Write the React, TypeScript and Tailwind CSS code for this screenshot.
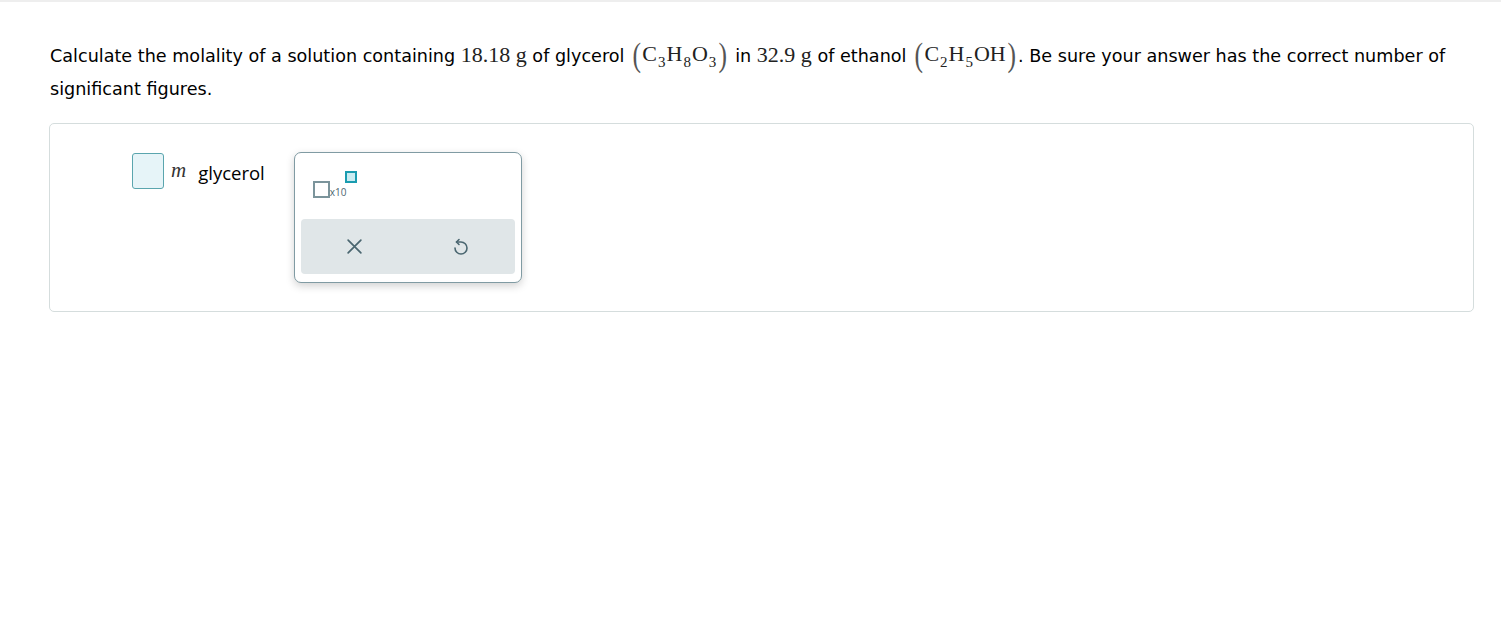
import React from 'react'

const TEXT = { fontFamily: '"DejaVu Sans", Verdana, sans-serif' }
const MATH = { fontFamily: '"Liberation Serif", "Times New Roman", serif' }
const UI = { fontFamily: '"Open Sans", "Noto Sans", sans-serif' }

function Sub({ children }: { children: React.ReactNode }) {
  return <span className="relative top-[6px] text-[15px] ml-[1px] mr-[1px]">{children}</span>
}

function Paren({ children }: { children: React.ReactNode }) {
  return (
    <span className="inline-flex items-center align-middle -mt-[4px] mx-[1px]" style={MATH}>
      <span className="text-[34px] leading-none text-[#555] scale-x-75 inline-block">(</span>
      <span className="text-[22px] text-[#222]">{children}</span>
      <span className="text-[34px] leading-none text-[#555] scale-x-75 inline-block">)</span>
    </span>
  )
}

function M({ children }: { children: React.ReactNode }) {
  return <span className="text-[22px] leading-none text-[#222]" style={MATH}>{children}</span>
}

export default function App() {
  return (
    <div className="min-h-[636px] bg-white border-t-2 border-[#eeeeee]">
      <div className="pl-[50px] pr-[30px] pt-[38px]">
        <p className="text-[17.6px] leading-[33px] text-black" style={TEXT}>
          Calculate the molality of a solution containing <M>18.18 g</M> of glycerol{' '}
          <Paren>C<Sub>3</Sub>H<Sub>8</Sub>O<Sub>3</Sub></Paren> in <M>32.9 g</M> of ethanol{' '}
          <Paren>C<Sub>2</Sub>H<Sub>5</Sub>OH</Paren>. Be sure your answer has the correct number of
          significant figures.
        </p>
      </div>

      <div className="ml-[49px] mr-[27px] mt-[17px] h-[189px] rounded-[5px] border border-[#d5dddd] pl-[82px] pt-[29px] flex items-start">
        <div className="flex items-center">
          <div className="w-[32px] h-[36px] rounded-[3px] border border-[#5aa5ae] bg-[#e6f4f8]" />
          <span className="ml-[7px] text-[21px] italic text-[#333]" style={MATH}>m</span>
          <span className="ml-[12px] text-[18.5px] text-black mt-[4px]" style={UI}>glycerol</span>
        </div>

        <div className="ml-[29px] -mt-[1px] w-[228px] h-[131px] rounded-[7px] border border-[#809ba3] bg-white shadow-[0_3px_8px_rgba(0,0,0,0.18)] px-[6px] pt-[18px]">
          <div className="flex items-end h-[27px] pl-[12px]">
            <div className="w-[17px] h-[17px] border-2 border-[#7b949b]" />
            <span className="text-[10px] leading-none text-[#4c6670] mb-[1px]" style={UI}>x10</span>
            <div className="self-start -ml-[1px] w-[12px] h-[12px] border-2 border-[#1a9cb0] bg-[#c9ecf2]" />
          </div>
          <div className="mt-[21px] h-[55px] rounded-[4px] bg-[#e0e6e8] flex items-center">
            <div className="w-1/2 flex justify-center">
              <svg width="17" height="17" viewBox="0 0 16 16" fill="none" stroke="#4a6670" strokeWidth="1.6" strokeLinecap="round">
                <path d="M2 2 L14 14 M14 2 L2 14" />
              </svg>
            </div>
            <div className="w-1/2 flex justify-center">
              <svg width="16" height="19" viewBox="0 0 16 18" fill="none" stroke="#4a6670" strokeWidth="1.6" strokeLinecap="round" strokeLinejoin="round">
                <path d="M6 2 L3.5 4.5 L6 7" />
                <path d="M3.5 4.5 H8 A6 6 0 1 1 2 10.5" />
              </svg>
            </div>
          </div>
        </div>
      </div>
    </div>
  )
}
